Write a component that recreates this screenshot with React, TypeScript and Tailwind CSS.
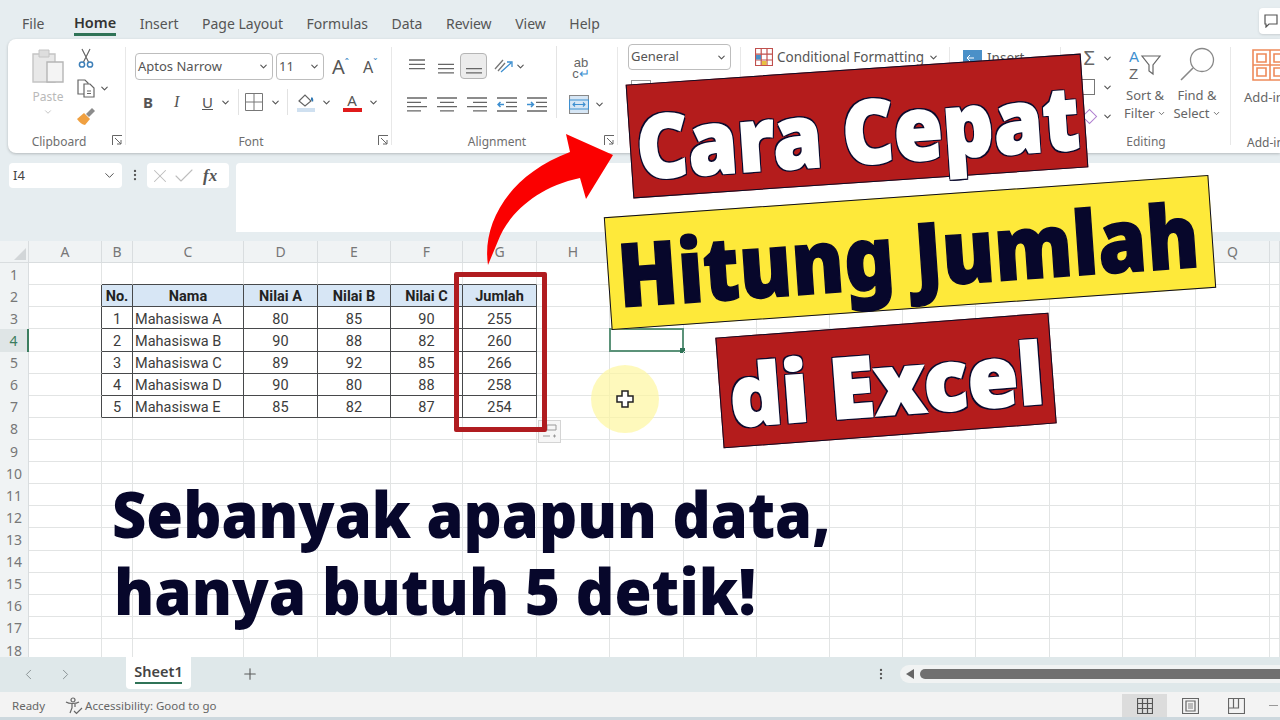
import { ChevronDown, ChevronLeft, ChevronRight, MoreVertical, Plus, X, Check } from 'lucide-react';
import type { ReactNode } from 'react';

const TABS = ['File', 'Home', 'Insert', 'Page Layout', 'Formulas', 'Data', 'Review', 'View', 'Help'];
const COLS = ['', 'A', 'B', 'C', 'D', 'E', 'F', 'G', 'H', 'I', 'J', 'K', 'L', 'M', 'N', 'O', 'P', 'Q', ''];
const ROWS = Array.from({ length: 18 }, (_, i) => i + 1);

const TABLE = [
  ['No.', 'Nama', 'Nilai A', 'Nilai B', 'Nilai C', 'Jumlah'],
  ['1', 'Mahasiswa A', '80', '85', '90', '255'],
  ['2', 'Mahasiswa B', '90', '88', '82', '260'],
  ['3', 'Mahasiswa C', '89', '92', '85', '266'],
  ['4', 'Mahasiswa D', '90', '80', '88', '258'],
  ['5', 'Mahasiswa E', '85', '82', '87', '254'],
];

function Chev() {
  return <ChevronDown size={11} strokeWidth={2.4} className="shrink-0 text-[#555]" />;
}

function Launcher() {
  return (
    <svg width="11" height="11" viewBox="0 0 11 11" fill="none" stroke="#666" strokeWidth="1" className="absolute right-[3px] top-[8px]">
      <path d="M.5 10V.5H10" />
      <path d="M3 3l6 6M9 5v4H5" />
    </svg>
  );
}

function Group({ w, label, launcher, divider = true, children }: { w: string; label: string; launcher?: boolean; divider?: boolean; children: ReactNode }) {
  return (
    <div className={`relative flex h-full shrink-0 flex-col ${w}`}>
      <div className="h-[88px] min-h-0">{children}</div>
      <div className={`relative flex h-[26px] items-start justify-center pt-[7px] text-[12px] leading-[16px] text-[#6e6e6e] ${launcher ? 'pr-[16px]' : ''}`}>
        {label}
        {launcher && <Launcher />}
      </div>
      {divider && <div className="absolute bottom-[8px] right-0 top-[8px] w-px bg-[#e8e8e8]" />}
    </div>
  );
}

function Lines({ w = [20, 14, 20, 14], x = 'left', color = '#666' }: { w?: number[]; x?: 'left' | 'center' | 'right'; color?: string }) {
  return (
    <svg width="20" height="17" viewBox="0 0 20 17" stroke={color} strokeWidth="1.3" className="shrink-0">
      {w.map((l, i) => {
        const x1 = x === 'left' ? 0 : x === 'center' ? (20 - l) / 2 : 20 - l;
        return <line key={i} x1={x1} x2={x1 + l} y1={2 + i * 4.3} y2={2 + i * 4.3} />;
      })}
    </svg>
  );
}

function Indent({ flip }: { flip?: boolean }) {
  return (
    <svg width="20" height="17" viewBox="0 0 20 17" fill="none" strokeWidth="1.3" className="shrink-0">
      <path d="M0 2h20M9 6.3h11M9 10.6h11M0 15h20" stroke="#666" />
      <path d={flip ? 'M0 8.5h6M4 6l2.5 2.5L4 11' : 'M7 8.5H1M3.5 6L1 8.5 3.5 11'} stroke="#3d8fd0" strokeWidth="1.5" />
    </svg>
  );
}

function Ribbon() {
  return (
    <div className="ml-2 flex h-[114px] overflow-hidden rounded-l-lg bg-white shadow-[0_1px_3px_rgba(0,0,0,0.22)]">
      <Group w="w-[118px]" label="Clipboard" launcher>
        <div className="flex pl-[21px] pt-[9px]">
          <div className="flex w-[38px] flex-col items-center text-[12px] text-[#b9b9b9]">
            <svg width="34" height="36" viewBox="0 0 34 36" fill="none" className="shrink-0">
              <path d="M2 6h22v28H2z" fill="#e8e8e8" stroke="#c4c4c4" strokeWidth="1.4" />
              <path d="M8 2h10v7H8z" fill="#ddd" stroke="#c4c4c4" />
              <path d="M16 14h16v20H16z" fill="#f4f4f4" stroke="#b5b5b5" strokeWidth="1.4" />
            </svg>
            <span className="mt-[5px] leading-[16px]">Paste</span>
            <ChevronDown size={10} className="mt-[2px] text-[#bbb]" />
          </div>
          <div className="ml-[9px] flex flex-col gap-[4px]">
            <svg width="20" height="20" viewBox="0 0 20 20" fill="none" strokeWidth="1.2">
              <path d="M6 1l6.5 13M14 1L7.5 14" stroke="#666" />
              <circle cx="6" cy="16.5" r="2.6" stroke="#3d7fb8" strokeWidth="1.5" />
              <circle cx="14" cy="16.5" r="2.6" stroke="#3d7fb8" strokeWidth="1.5" />
            </svg>
            <div className="mt-[6px] flex items-center gap-[3px]">
              <svg width="20" height="20" viewBox="0 0 20 20" fill="none" stroke="#666" strokeWidth="1.2">
                <path d="M2 2h7l3 3v11H2z" />
                <path d="M8 6h6l4 4v9H8z" fill="#fff" />
                <path d="M11 13h4M11 15.5h4" />
              </svg>
              <Chev />
            </div>
            <svg width="20" height="20" viewBox="0 0 20 20" className="mt-[5px]">
              <path d="M1 12l7-6 6 6-5 6c-2 0-6-3-8-6z" fill="#f0a040" />
              <path d="M10 7l6-6 3 3-6 6z" fill="#8c8c8c" />
            </svg>
          </div>
        </div>
      </Group>

      <Group w="w-[266px]" label="Font" launcher>
        <div className="flex items-center pl-[9px] pt-[14px]">
          <div className="flex h-[27px] w-[138px] items-center justify-between rounded border border-[#bdbdbd] px-[2px] pr-[3px] text-[13px] text-[#555]">
            Aptos Narrow
            <Chev />
          </div>
          <div className="ml-[3px] flex h-[27px] w-[48px] items-center justify-between rounded border border-[#bdbdbd] px-[2px] pr-[3px] text-[13px] text-[#555]">
            11
            <Chev />
          </div>
          <span className="ml-[8px] text-[20px] leading-none text-[#555]">A</span>
          <span className="-mt-[8px] text-[10px] leading-none text-[#4a90c8]">ˆ</span>
          <span className="ml-[14px] text-[16px] leading-none text-[#555]">A</span>
          <span className="-mt-[8px] text-[10px] leading-none text-[#4a90c8]">ˇ</span>
        </div>
        <div className="mt-[8px] flex h-[28px] items-center pl-[17px] text-[#555]">
          <span className="w-[12px] text-[15px] font-bold">B</span>
          <span className="ml-[19px] w-[8px] font-['Liberation_Serif',serif] text-[16px] italic">I</span>
          <span className="ml-[20px] w-[12px] text-[15px] underline">U</span>
          <span className="ml-[6px]"><Chev /></span>
          <div className="ml-[7px] h-[26px] w-px bg-[#e2e2e2]" />
          <svg width="18" height="18" viewBox="0 0 18 18" fill="none" stroke="#777" strokeWidth="1" className="ml-[6px]">
            <path d="M.5.5h17v17H.5zM9 .5v17M.5 9h17" />
          </svg>
          <span className="ml-[7px]"><Chev /></span>
          <div className="ml-[6px] h-[26px] w-px bg-[#e2e2e2]" />
          <svg width="18" height="20" viewBox="0 0 18 20" className="ml-[9px]">
            <path d="M2 9l6-6 6 6-6 5z" fill="#fff" stroke="#666" strokeWidth="1.2" />
            <path d="M14 6c1-2 3 1 2 4l-2-2z" fill="#2e78b5" />
            <rect y="16" width="18" height="4" fill="#cfe0f0" />
          </svg>
          <span className="ml-[6px]"><Chev /></span>
          <div className="ml-[10px] flex w-[20px] flex-col items-center">
            <span className="text-[15px] leading-[15px]">A</span>
            <div className="h-[4px] w-[19px] bg-[#e01b1b]" />
          </div>
          <span className="ml-[6px]"><Chev /></span>
        </div>
      </Group>

      <Group w="w-[226px]" label="Alignment" launcher>
        <div className="flex">
          <div className="w-[164px] pl-[15px]">
            <div className="flex h-[50px] items-center pt-[4px]">
              <Lines w={[16, 16, 16]} x="center" />
              <span className="ml-[9px]"><Lines w={[0, 16, 16, 16]} x="center" /></span>
              <div className="ml-[4px] flex h-[26px] w-[27px] items-center justify-center rounded border border-[#b5b5b5] bg-[#ececec]">
                <Lines w={[0, 0, 16, 16]} x="center" />
              </div>
              <svg width="20" height="18" viewBox="0 0 20 18" fill="none" strokeWidth="1.3" className="ml-[6px]">
                <path d="M2 12l8-9M5 14l7-8" stroke="#777" />
                <path d="M8 15l10-9M14 5h5v5" stroke="#3d8fd0" />
              </svg>
              <span className="ml-[2px]"><Chev /></span>
            </div>
            <div className="mt-[1px] flex h-[28px] items-center gap-[10px]">
              <Lines x="left" />
              <Lines x="center" />
              <Lines x="right" />
              <Indent />
              <Indent flip />
            </div>
          </div>
          <div className="h-[72px] w-px self-end bg-[#e4e4e4]" />
          <div className="pl-[12px]">
            <div className="flex h-[50px] items-center pt-[12px] pl-[2px]">
              <div className="relative h-[26px] w-[20px] text-center font-['Liberation_Sans',sans-serif] text-[13px] leading-[11px] text-[#666]">
                ab
                <br />
                c<span className="text-[#3d8fd0]">↵</span>
              </div>
            </div>
            <div className="mt-[1px] flex h-[28px] items-center gap-[5px]">
              <svg width="20" height="19" viewBox="0 0 20 19" fill="#d6e6f5" stroke="#3d8fd0" strokeWidth="1.1">
                <path d="M.5.5h19v18H.5z" stroke="#888" />
                <path d="M.5 5h19v9H.5z" />
                <path d="M4 9.5h12M6 7.5l-2 2 2 2M14 7.5l2 2-2 2" fill="none" />
              </svg>
              <Chev />
            </div>
          </div>
        </div>
      </Group>

      <Group w="w-[123px]" label="">
        <div className="pl-[10px] pt-[5px]">
          <div className="flex h-[26px] w-[103px] items-center justify-between rounded border border-[#bdbdbd] px-[2px] pr-[3px] text-[13px] text-[#555]">
            General
            <Chev />
          </div>
          <div className="ml-[3px] mt-[10px] h-[14px] w-[20px] border border-[#999]" />
        </div>
      </Group>

      <Group w="w-[209px]" label="">
        <div className="flex items-center gap-[4px] pl-[14px] pt-[8px] text-[13.5px] text-[#555]">
          <svg width="18" height="18" viewBox="0 0 18 18" fill="none" stroke="#c0504d" strokeWidth="1.2" className="shrink-0">
            <path d="M.5.5h17v17H.5zM.5 6.2h17M.5 12h17M6.2.5v17M12 .5v17" />
            <rect x="1" y="7" width="5" height="4.5" fill="#4a90c8" stroke="none" />
            <rect x="7" y="13" width="4.5" height="4" fill="#e8c040" stroke="none" />
          </svg>
          <span className="whitespace-nowrap">Conditional Formatting</span>
          <Chev />
        </div>
      </Group>

      <Group w="w-[111px]" label="">
        <div className="flex items-center gap-[5px] pl-[13px] pt-[9px] text-[13.5px] text-[#555]">
          <svg width="19" height="16" viewBox="0 0 19 16" className="shrink-0">
            <rect width="19" height="16" fill="#4a90c8" />
            <path d="M4 8h7M7 5L4 8l3 3" stroke="#fff" fill="none" />
          </svg>
          Insert
        </div>
      </Group>

      <Group w="w-[170px]" label="Editing">
        <div className="flex">
          <div className="flex w-[52px] flex-col items-end gap-[7px] pt-[8px] text-[#666]">
            <div className="flex h-[22px] items-center gap-[7px] text-[20px] leading-none">Σ<Chev /></div>
            <div className="flex h-[22px] items-center gap-[7px]">
              <div className="h-[16px] w-[15px] border border-[#777]" />
              <Chev />
            </div>
            <div className="flex h-[22px] items-center gap-[7px]">
              <div className="h-[11px] w-[11px] rotate-45 border border-[#b080d0]" />
              <Chev />
            </div>
          </div>
          <div className="ml-[6px] flex w-[52px] flex-col items-center text-[13px] leading-[18px] text-[#666]">
            <svg width="34" height="34" viewBox="0 0 34 34" fill="none" className="mt-[9px]">
              <text x="1" y="14" fontSize="15" fill="#3d8fd0" fontFamily="Liberation Sans">A</text>
              <text x="1" y="31" fontSize="15" fill="#666" fontFamily="Liberation Sans">Z</text>
              <path d="M14 8h18l-7 9v9l-4-3v-6z" stroke="#666" strokeWidth="1.2" />
            </svg>
            <span className="mt-[4px] whitespace-nowrap">Sort &amp;</span>
            <span className="flex items-center gap-[2px] whitespace-nowrap">Filter<ChevronDown size={9} strokeWidth={2.4} /></span>
          </div>
          <div className="flex w-[52px] flex-col items-center text-[13px] leading-[18px] text-[#666]">
            <svg width="36" height="36" viewBox="0 0 36 36" fill="none" stroke="#888" strokeWidth="1.3" className="mt-[8px]">
              <circle cx="23" cy="13" r="11.5" />
              <path d="M14 21L2 33" strokeWidth="1.6" />
            </svg>
            <span className="mt-[3px] whitespace-nowrap">Find &amp;</span>
            <span className="flex items-center gap-[2px] whitespace-nowrap">Select<ChevronDown size={9} strokeWidth={2.4} /></span>
          </div>
        </div>
      </Group>

      <div className="relative min-w-0 flex-1 overflow-hidden text-[13px] text-[#666]">
        <svg width="36" height="32" viewBox="0 0 36 32" fill="none" stroke="#ee8a5a" strokeWidth="1.6" className="ml-[21px] mt-[10px]">
          <path d="M1 1h34v30H1zM1 16h34M18 1v30M5 5h9v8H5zM22 5h9v8h-9zM5 19h9v8H5zM22 19h9v8h-9z" />
        </svg>
        <div className="ml-[13px] mt-[7px] whitespace-nowrap leading-[18px]">Add-ins</div>
        <div className="ml-[16px] mt-[29px] whitespace-nowrap text-[12px] leading-[16px]">Add-ins</div>
      </div>
    </div>
  );
}

function FormulaBar() {
  return (
    <div className="mt-[10px] flex h-[69px] items-start">
      <div className="ml-[9px] flex h-[25px] w-[113px] items-center justify-between rounded bg-white pl-[4px] pr-[5px] text-[13px] text-[#444]">
        I4
        <ChevronDown size={15} strokeWidth={1.6} className="text-[#555]" />
      </div>
      <MoreVertical size={14} className="ml-[6px] mt-[5px] text-[#555]" />
      <div className="ml-[5px] flex h-[25px] w-[82px] items-center rounded bg-white pl-[2px] text-[#bdbdbd]">
        <X size={22} strokeWidth={1.1} />
        <Check size={24} strokeWidth={1.1} className="ml-[1px]" />
        <span className="ml-[7px] font-['Liberation_Serif',serif] text-[17px] font-bold italic text-[#555]">fx</span>
      </div>
      <div className="ml-[7px] h-[69px] flex-1 rounded-tl bg-white" />
    </div>
  );
}

function cellClass(r: number, c: number) {
  const inTableRow = r >= 2 && r <= 7;
  const inTableCol = c >= 2 && c <= 7;
  const right = inTableRow && c >= 1 && c <= 7 ? 'border-r-[#47494b]' : 'border-r-[#e2e4e4]';
  const bottom = r >= 1 && r <= 7 && inTableCol ? 'border-b-[#47494b]' : 'border-b-[#e2e4e4]';
  return `${right} ${bottom}`;
}

function Sheet() {
  return (
    <div className="mt-[9px] min-h-0 flex-1 overflow-hidden bg-white">
      <div className="grid auto-rows-[22.11px] grid-cols-[29px_73px_31px_111px_74px_73px_72px_74px_73px_74px_73px_73px_73px_73px_74px_73px_73px_74px_10px]">
        {COLS.map((name, c) => (
          <div key={c} className="relative flex items-center justify-center border-b border-r border-[#d9dddf] bg-[#f0f3f4] text-[14px] text-[#777]">
            {c === 0 && <div className="absolute bottom-[2px] right-[2px] h-0 w-0 border-b-[12px] border-l-[12px] border-b-[#d2d6d8] border-l-transparent" />}
            {name}
          </div>
        ))}
        {ROWS.map((r) =>
          COLS.map((_, c) => {
            if (c === 0) {
              return (
                <div
                  key={c}
                  className={
                    r === 4
                      ? 'flex items-center justify-center border-r-2 border-[#3b7d5f] bg-[#dfe5e6] text-[14px] text-[#3b7d5f]'
                      : 'flex items-center justify-center border-r border-[#d9dddf] bg-[#f0f3f4] text-[14px] text-[#777]'
                  }
                >
                  {r}
                </div>
              );
            }
            const row = TABLE[r - 2];
            const text = row && c >= 2 && c <= 7 ? row[c - 2] : null;
            const header = r === 2 && text !== null;
            const selected = r === 4 && c === 9;
            return (
              <div
                key={c}
                className={`relative flex items-center overflow-visible whitespace-nowrap border-b border-r pt-[3px] font-['Liberation_Sans_Narrow','Roboto',sans-serif] text-[14.5px] ${cellClass(r, c)} ${
                  c === 3 && r > 2 ? 'justify-start pl-[2px]' : 'justify-center'
                } ${header ? 'bg-[#d7e6f5] font-bold text-[#222]' : 'text-[#3c3c3c]'}`}
              >
                {text}
                {selected && (
                  <div className="absolute -left-px -top-px bottom-[-1px] right-[-1px] border-2 border-[#5b9279]">
                    <div className="absolute bottom-[-3px] right-[-3px] h-[5px] w-[5px] bg-[#2f7357]" />
                  </div>
                )}
              </div>
            );
          })
        )}
      </div>
    </div>
  );
}

function SheetBar() {
  return (
    <div className="flex h-[35px] items-start bg-[#dfe8ea]">
      <ChevronLeft size={17} strokeWidth={1.4} className="ml-[20px] mt-[9px] text-[#8b9496]" />
      <ChevronRight size={17} strokeWidth={1.4} className="ml-[20px] mt-[9px] text-[#8b9496]" />
      <div className="ml-[52px] flex h-[32px] w-[65px] flex-col items-center rounded-b bg-white pt-[5px]">
        <span className="text-[14.5px] font-semibold leading-[19px] text-[#444]">Sheet1</span>
        <div className="mt-[1px] h-[2px] w-[47px] bg-[#2f7357]" />
      </div>
      <Plus size={18} strokeWidth={1.5} className="ml-[50px] mt-[8px] text-[#5b5b5b]" />
      <MoreVertical size={14} className="ml-[615px] mt-[10px] text-[#555]" />
      <div className="ml-[12px] mt-[8px] flex h-[18px] flex-1 items-center rounded-l-full bg-[#f1f3f3] pl-[6px]">
        <div className="h-0 w-0 border-y-[5px] border-r-[8px] border-y-transparent border-r-[#666]" />
        <div className="ml-[6px] h-[10px] flex-1 rounded-l-full bg-[#707070]" />
      </div>
    </div>
  );
}

function StatusBar() {
  return (
    <div className="flex h-[25px] items-center bg-[#f3f3f3] pt-[2px] text-[11.5px] text-[#666]">
      <span className="ml-[12px]">Ready</span>
      <svg width="18" height="18" viewBox="0 0 18 18" fill="none" stroke="#666" strokeWidth="1.2" className="ml-[20px]">
        <circle cx="8" cy="3" r="2" />
        <path d="M1 5c3 2 10 2 13 0M7 7v4l-2 5M10 7v3" />
        <path d="M9 14l2.5 2.5L17 11" />
      </svg>
      <span className="ml-[2px]">Accessibility: Good to go</span>
      <div className="ml-auto flex h-full items-center">
        <div className="flex h-full w-[45px] items-center justify-center bg-[#dcdcdc]">
          <svg width="16" height="16" viewBox="0 0 16 16" fill="none" stroke="#555" strokeWidth="1.2">
            <path d="M.5.5h15v15H.5zM5.5.5v15M10.5.5v15M.5 5.5h15M.5 10.5h15" />
          </svg>
        </div>
        <div className="flex w-[46px] justify-center">
          <svg width="17" height="16" viewBox="0 0 17 16" fill="none" stroke="#666" strokeWidth="1.2">
            <path d="M.5.5h16v15H.5zM4 3h9v10H4z" />
            <path d="M6 6h5M6 8h5M6 10h5" strokeWidth=".8" />
          </svg>
        </div>
        <div className="flex w-[46px] justify-center">
          <svg width="17" height="16" viewBox="0 0 17 16" fill="none" stroke="#666" strokeWidth="1.2">
            <path d="M.5.5h16v15H.5zM.5 10h10V.5M5.5.5V10" />
          </svg>
        </div>
        <div className="ml-[10px] mr-[2px] h-[1.5px] w-[9px] bg-[#999]" />
      </div>
    </div>
  );
}

function Banner({ className, textClass, children }: { className: string; textClass: string; children: ReactNode }) {
  return (
    <div className={`absolute flex items-center justify-center border-[1.5px] border-[#0b0b24] ${className}`}>
      <span className={`inline-block whitespace-nowrap font-['Noto_Sans',sans-serif] font-black leading-none ${textClass}`}>{children}</span>
    </div>
  );
}

export default function App() {
  return (
    <div className="relative flex h-[720px] w-[1280px] flex-col overflow-hidden bg-[#e6edf0] font-['Noto_Sans','Open_Sans',sans-serif]">
      <div className="flex h-[39px] items-center gap-[23.5px] pl-[22px] pt-[7px] text-[14px] text-[#555]">
        {TABS.map((t) => (
          <div key={t} className={t === 'Home' ? 'relative ml-[6px] text-[14.5px] font-semibold text-[#333]' : ''}>
            {t}
            {t === 'Home' && <div className="absolute -bottom-[2px] left-0 right-0 h-[2.5px] bg-[#2f7357]" />}
          </div>
        ))}
      </div>
      <Ribbon />
      <FormulaBar />
      <Sheet />
      <SheetBar />
      <StatusBar />
      <div className="h-[3px] bg-[#cdd8de]" />

      {/* comment button, top right */}
      <div className="absolute left-[1259px] top-[8px] flex h-[26px] w-[30px] items-center rounded-l bg-white pl-[5px] shadow-sm">
        <svg width="14" height="14" viewBox="0 0 14 14" fill="none" stroke="#555" strokeWidth="1.2">
          <path d="M1 1h12v9H5l-3 3v-3H1z" />
        </svg>
      </div>

      {/* cursor highlight */}
      <div className="absolute left-[591px] top-[365px] h-[68px] w-[68px] rounded-full bg-[#fdf6a0]/70" />
      <svg width="18" height="18" viewBox="0 0 18 18" className="absolute left-[616px] top-[390px]">
        <path d="M6 1h6v5h5v6h-5v5H6v-5H1V6h5z" fill="#fff" stroke="#222" strokeWidth="1.5" />
      </svg>

      {/* paste options tag */}
      <div className="absolute left-[538px] top-[420px] flex h-[23px] w-[23px] items-center justify-center border border-[#d4d4d4] bg-[#f6f6f6]">
        <svg width="17" height="17" viewBox="0 0 17 17" fill="none" stroke="#9a9a9a">
          <rect x="1" y="1" width="5" height="6" fill="#3d8fd0" stroke="none" />
          <path d="M6 2h9v5H6zM2 13h7M12 13h3M13.5 11.5v3" />
        </svg>
      </div>

      {/* red box around Jumlah */}
      <div className="absolute left-[454px] top-[272px] h-[160px] w-[93px] rounded-[2px] border-[5px] border-[#b01c20]" />

      {/* curved arrow */}
      <svg width="140" height="140" viewBox="480 130 140 140" className="absolute left-[480px] top-[130px]">
        <path d="M488 265C482 226 506 176 570 152L566 134L613 155L586 199L580 178C537 187 508 214 498 241Z" fill="#fb0000" />
      </svg>

      <Banner className="left-[629px] top-[69px] h-[114px] w-[456px] -rotate-[3.9deg] bg-[#b41c1c] pt-[8px]" textClass="scale-x-[0.9] text-[88px] text-white [-webkit-text-stroke:2px_#fff] [text-shadow:2px_0_#0b0b2e,-2px_0_#0b0b2e,0_2px_#0b0b2e,0_-2px_#0b0b2e,2px_2px_#0b0b2e,-2px_2px_#0b0b2e,2px_-2px_#0b0b2e,-2px_-2px_#0b0b2e]">
        Cara Cepat
      </Banner>
      <Banner className="left-[607px] top-[196px] h-[113px] w-[606px] -rotate-[4deg] bg-[#fee93a] pr-[4px]" textClass="scale-x-[0.89] text-[88px] text-[#07072b] [-webkit-text-stroke:1.5px_#07072b]">
        Hitung Jumlah
      </Banner>
      <Banner className="left-[719px] top-[325px] h-[111px] w-[334px] -rotate-[4.3deg] bg-[#b41c1c] pt-[4px]" textClass="scale-x-[0.97] text-[84px] text-white [-webkit-text-stroke:2px_#fff] [text-shadow:2px_0_#0b0b2e,-2px_0_#0b0b2e,0_2px_#0b0b2e,0_-2px_#0b0b2e,2px_2px_#0b0b2e,-2px_2px_#0b0b2e,2px_-2px_#0b0b2e,-2px_-2px_#0b0b2e]">
        di Excel
      </Banner>

      {/* caption */}
      <div className="absolute left-[112px] top-[475px] font-black text-[#07072b]">
        <div className="origin-left scale-x-[0.93] whitespace-nowrap text-[64px] leading-[77px]">Sebanyak apapun data,</div>
        <div className="ml-[2px] origin-left scale-x-[0.94] whitespace-nowrap text-[64px] leading-[77px]">hanya butuh 5 detik!</div>
      </div>
    </div>
  );
}
